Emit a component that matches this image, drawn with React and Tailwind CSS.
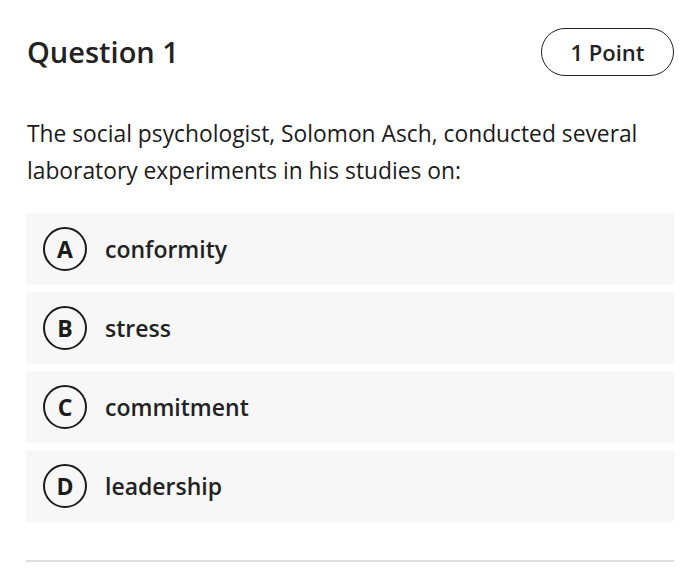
const options = [
  { letter: 'A', text: 'conformity' },
  { letter: 'B', text: 'stress' },
  { letter: 'C', text: 'commitment' },
  { letter: 'D', text: 'leadership' },
];

export default function App() {
  return (
    <div className="w-[700px] h-[573px] bg-white px-[26px] text-[#1b1b1b] font-['Open_Sans',sans-serif] overflow-hidden">
      {/* header */}
      <div className="flex items-center justify-between pt-[28px]">
        <h1 className="text-[29px] font-semibold leading-[48px] pl-px text-[#222]">Question 1</h1>
        <div className="h-[48px] w-[133px] rounded-full border-[1.5px] border-[#222] flex items-center justify-center text-[22px] font-semibold text-[#222]">
          1 Point
        </div>
      </div>

      <p className="mt-[39px] text-[22.8px] leading-[37px] pl-px">
        The social psychologist, Solomon Asch, conducted several laboratory experiments in his studies on:
      </p>

      <div className="mt-[24px] flex flex-col gap-[7px]">
        {options.map((o) => (
          <div key={o.letter} className="h-[72px] bg-[#f7f7f7] rounded-[2px] flex items-center pl-[17px]">
            <div className="w-[44px] h-[44px] rounded-full border-[2.5px] border-[#1b1b1b] flex items-center justify-center text-[23px] font-bold leading-none">
              {o.letter}
            </div>
            <span className="ml-[18px] text-[23px] font-semibold text-[#222]">{o.text}</span>
          </div>
        ))}
      </div>

      <div className="mt-[38px] h-[2px] bg-[#dedede]" />
    </div>
  );
}
